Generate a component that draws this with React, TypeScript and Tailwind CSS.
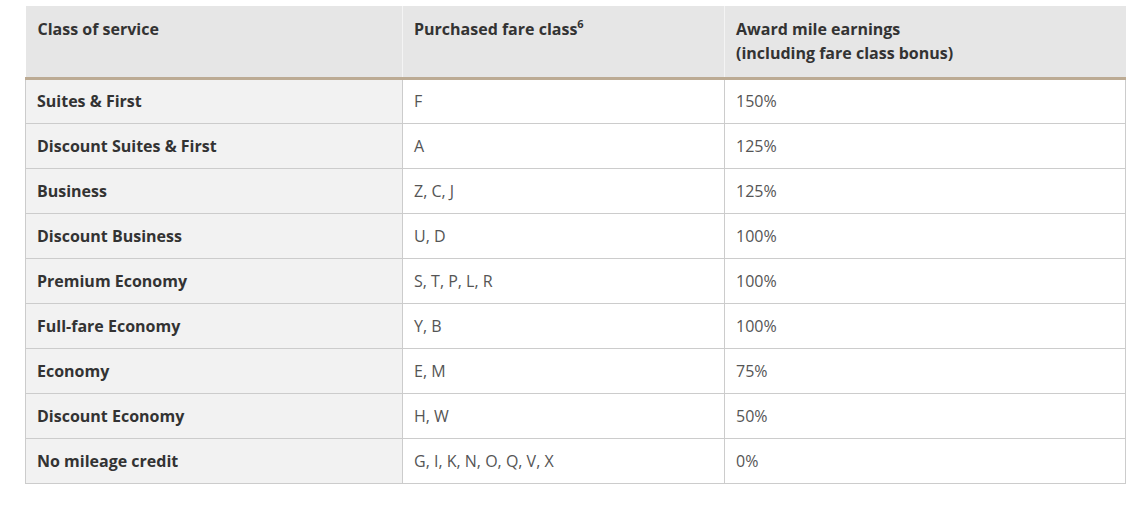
import React from "react";

const rows: [string, string, string][] = [
  ["Suites & First", "F", "150%"],
  ["Discount Suites & First", "A", "125%"],
  ["Business", "Z, C, J", "125%"],
  ["Discount Business", "U, D", "100%"],
  ["Premium Economy", "S, T, P, L, R", "100%"],
  ["Full-fare Economy", "Y, B", "100%"],
  ["Economy", "E, M", "75%"],
  ["Discount Economy", "H, W", "50%"],
  ["No mileage credit", "G, I, K, N, O, Q, V, X", "0%"],
];

export default function App() {
  return (
    <div
      className="w-[1142px] h-[519px] bg-white pl-[25px] pt-[6px]"
      style={{ fontFamily: '"Open Sans", "Liberation Sans", sans-serif' }}
    >
      <table className="w-[1100px] border-collapse table-fixed text-[16px] leading-[24px]">
        <colgroup>
          <col className="w-[377px]" />
          <col className="w-[322px]" />
          <col className="w-[401px]" />
        </colgroup>
        <thead>
          <tr className="bg-[#e6e6e6] border-b-[3px] border-b-[#bcab94]">
            <th className="text-left align-top font-bold text-[#333] pl-[12px] pr-[12px] pt-[11px] pb-[10px] h-[72px]">
              Class of service
            </th>
            <th className="text-left align-top font-bold text-[#333] pl-[11px] pr-[12px] pt-[11px] pb-[10px] border-l border-l-[#f4f4f4]">
              Purchased fare class
              <sup className="text-[11px] relative -top-[7px] align-baseline">6</sup>
            </th>
            <th className="text-left align-top font-bold text-[#333] pl-[11px] pr-[12px] pt-[11px] pb-[10px] border-l border-l-[#f4f4f4]">
              Award mile earnings
              <br />
              (including fare class bonus)
            </th>
          </tr>
        </thead>
        <tbody>
          {rows.map(([a, b, c], i) => (
            <tr key={i} className="border-b border-b-[#cccccc]">
              <td className="bg-[#f2f2f2] font-bold text-[#333] pl-[11px] pr-[12px] h-[45px] border-l border-l-[#cccccc] align-middle">
                {a}
              </td>
              <td className="text-[#555] pl-[11px] pr-[12px] border-l border-l-[#cccccc] align-middle">
                {b}
              </td>
              <td className="text-[#555] pl-[11px] pr-[12px] border-l border-r border-l-[#cccccc] border-r-[#cccccc] align-middle">
                {c}
              </td>
            </tr>
          ))}
        </tbody>
      </table>
    </div>
  );
}
